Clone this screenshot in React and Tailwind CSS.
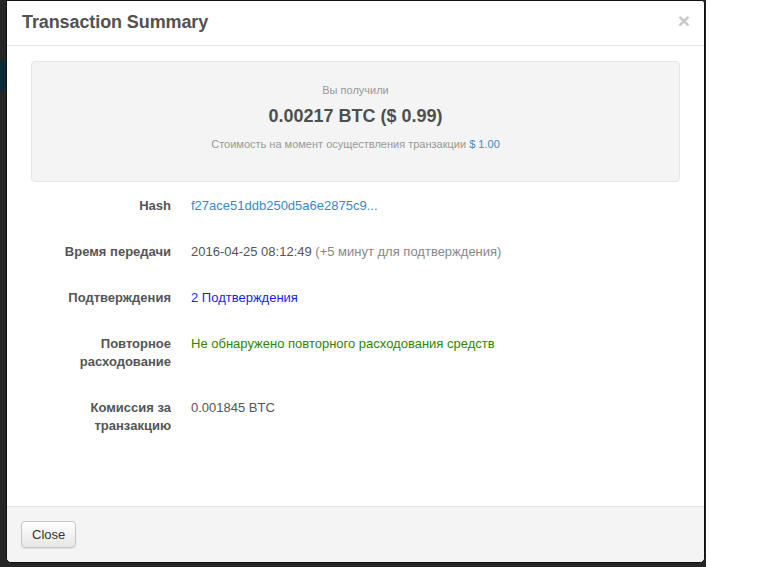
import React from 'react';

const rows = [
  {
    label: 'Hash',
    value: <span className="text-[#3a87c8]">f27ace51ddb250d5a6e2875c9...</span>,
  },
  {
    label: 'Время передачи',
    value: (
      <span className="text-[#555]">
        2016-04-25 08:12:49 <span className="text-[#888]">(+5 минут для подтверждения)</span>
      </span>
    ),
  },
  {
    label: 'Подтверждения',
    value: <span className="text-[#1a1aff]">2 Подтверждения</span>,
  },
  {
    label: 'Повторное расходование',
    value: <span className="text-[#2f8500]">Не обнаружено повторного расходования средств</span>,
  },
  {
    label: 'Комиссия за транзакцию',
    value: <span className="text-[#555]">0.001845 BTC</span>,
  },
];

const App = () => {
  return (
    <div
      className="flex h-[567px] w-[768px] overflow-hidden bg-white"
      style={{ fontFamily: '"Liberation Sans", Arial, sans-serif' }}
    >
      {/* backdrop strip with page behind */}
      <div className="relative flex h-full w-[706px] flex-col bg-[#262626] pl-[6px]">
        <div className="absolute left-0 top-[60px] h-[31px] w-[6px] bg-[#0d2a38]" />
        <div className="flex h-[563px] w-[699px] flex-col rounded-tr-[3px] rounded-b-[5px] border border-[#111] bg-white">
          <div className="flex h-[45px] shrink-0 items-start justify-between border-b border-[#e5e5e5] pl-[15px] pr-[14px] pt-[9px]">
            <h4 className="text-[18px] font-bold leading-[25px] tracking-[-0.1px] text-[#525252]">Transaction Summary</h4>
            <button className="pt-[1px] text-[21px] font-bold leading-[20px] text-[#c8c8c8]">×</button>
          </div>

          <div className="flex-1 px-6 pt-[15px]">
            <div className="flex h-[121px] flex-col items-center rounded border border-[#e6e6e6] bg-[#f4f4f4] pt-[20px]">
              <div className="text-[11px] leading-[16px] text-[#999]">Вы получили</div>
              <div className="mt-[7px] text-[18px] font-bold leading-[22px] text-[#4f4f4f]">0.00217 BTC ($ 0.99)</div>
              <div className="mt-[9px] text-[11px] leading-[16px] text-[#999]">
                Стоимость на момент осуществления транзакции <span className="text-[#428bca]">$ 1.00</span>
              </div>
            </div>

            <dl className="mt-[15px] flex flex-col gap-[28px] text-[13px] leading-[18px]">
              {rows.map((row) => (
                <div key={row.label} className="flex">
                  <dt className="w-[140px] shrink-0 text-right font-bold text-[#555]">{row.label}</dt>
                  <dd className="ml-[20px]">{row.value}</dd>
                </div>
              ))}
            </dl>
          </div>

          <div className="flex h-[56px] shrink-0 items-start rounded-b-[5px] border-t border-[#e2e2e2] bg-[#f4f4f4] pl-[14px] pt-[14px]">
            <button className="h-[27px] rounded border border-[#c6c6c6] bg-gradient-to-b from-white to-[#e6e6e6] px-[10px] text-[13px] leading-[25px] text-[#333] shadow-[0_1px_1px_rgba(0,0,0,0.08)]">
              Close
            </button>
          </div>
        </div>
      </div>
    </div>
  );
};

export default App;
